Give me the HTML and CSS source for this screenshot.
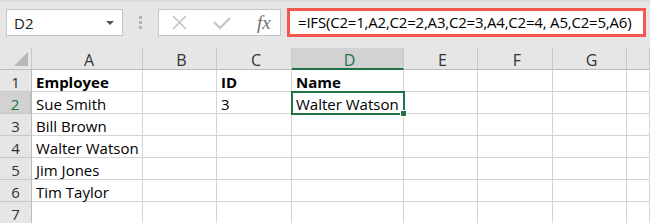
FILE: index.html
```html
<!DOCTYPE html>
<html lang="en">

<head>
    <meta charset="UTF-8">
    <title>IFS example</title>
    <link rel="stylesheet" href="styles.css">
</head>

<body>
    <div class="toolbar">
        <div class="name-box">
            <span>D2</span>
            <span class="caret"></span>
        </div>
        <div class="grip">
            <i></i><i></i><i></i>
        </div>
        <div class="fx-buttons">
            <svg class="btn-cancel" width="15" height="15" viewBox="0 0 15 15">
                <path d="M1 1 L14 14 M14 1 L1 14" stroke="#c4c4c4" stroke-width="1.6" fill="none" />
            </svg>
            <svg class="btn-enter" width="18" height="14" viewBox="0 0 18 14">
                <path d="M1 6 L7 12 L17 2" stroke="#c4c4c4" stroke-width="2.2" fill="none" />
            </svg>
            <span class="fx">fx</span>
        </div>
        <div class="formula">=IFS(C2=1,A2,C2=2,A3,C2=3,A4,C2=4, A5,C2=5,A6)</div>
    </div>

    <div class="sheet">
        <div class="row head">
            <div class="corner"><span class="tri"></span></div>
            <div class="cell c-a">A</div>
            <div class="cell c-b">B</div>
            <div class="cell c-c">C</div>
            <div class="cell c-d active">D</div>
            <div class="cell c-e">E</div>
            <div class="cell c-f">F</div>
            <div class="cell c-g">G</div>
            <div class="cell c-h"></div>
        </div>
        <div class="row">
            <div class="num">1</div>
            <div class="cell c-a bold">Employee</div>
            <div class="cell c-b"></div>
            <div class="cell c-c bold">ID</div>
            <div class="cell c-d bold">Name</div>
            <div class="cell c-e"></div>
            <div class="cell c-f"></div>
            <div class="cell c-g"></div>
            <div class="cell c-h"></div>
        </div>
        <div class="row">
            <div class="num active">2</div>
            <div class="cell c-a">Sue Smith</div>
            <div class="cell c-b"></div>
            <div class="cell c-c">3</div>
            <div class="cell c-d selected">Walter Watson<span class="handle"></span></div>
            <div class="cell c-e"></div>
            <div class="cell c-f"></div>
            <div class="cell c-g"></div>
            <div class="cell c-h"></div>
        </div>
        <div class="row">
            <div class="num">3</div>
            <div class="cell c-a">Bill Brown</div>
            <div class="cell c-b"></div>
            <div class="cell c-c"></div>
            <div class="cell c-d"></div>
            <div class="cell c-e"></div>
            <div class="cell c-f"></div>
            <div class="cell c-g"></div>
            <div class="cell c-h"></div>
        </div>
        <div class="row">
            <div class="num">4</div>
            <div class="cell c-a">Walter Watson</div>
            <div class="cell c-b"></div>
            <div class="cell c-c"></div>
            <div class="cell c-d"></div>
            <div class="cell c-e"></div>
            <div class="cell c-f"></div>
            <div class="cell c-g"></div>
            <div class="cell c-h"></div>
        </div>
        <div class="row">
            <div class="num">5</div>
            <div class="cell c-a">Jim Jones</div>
            <div class="cell c-b"></div>
            <div class="cell c-c"></div>
            <div class="cell c-d"></div>
            <div class="cell c-e"></div>
            <div class="cell c-f"></div>
            <div class="cell c-g"></div>
            <div class="cell c-h"></div>
        </div>
        <div class="row">
            <div class="num">6</div>
            <div class="cell c-a">Tim Taylor</div>
            <div class="cell c-b"></div>
            <div class="cell c-c"></div>
            <div class="cell c-d"></div>
            <div class="cell c-e"></div>
            <div class="cell c-f"></div>
            <div class="cell c-g"></div>
            <div class="cell c-h"></div>
        </div>
        <div class="row">
            <div class="num">7</div>
            <div class="cell c-a"></div>
            <div class="cell c-b"></div>
            <div class="cell c-c"></div>
            <div class="cell c-d"></div>
            <div class="cell c-e"></div>
            <div class="cell c-f"></div>
            <div class="cell c-g"></div>
            <div class="cell c-h"></div>
        </div>
    </div>
</body>

</html>
```

FILE: styles.css
```css
body {
    margin: 0;
    width: 650px;
    height: 223px;
    overflow: hidden;
    background: #e6e6e6;
    font-family: 'Open Sans', 'Noto Sans', sans-serif;
    color: #000;
}

/* formula bar */
.toolbar {
    height: 48px;
    box-sizing: border-box;
    padding-top: 7px;
    display: flex;
    align-items: flex-start;
    border-top: 2px solid #dadada;
}

.name-box {
    margin-left: 6px;
    width: 117px;
    height: 27px;
    box-sizing: border-box;
    background: #fff;
    border: 1px solid #c6c6c6;
    display: flex;
    align-items: center;
    justify-content: space-between;
    padding: 0 8px 0 7px;
    font-size: 15px;
    color: #222;
}

.caret {
    width: 0;
    height: 0;
    border-left: 4px solid transparent;
    border-right: 4px solid transparent;
    border-top: 4px solid #555;
}

.grip {
    width: 35px;
    height: 27px;
    display: flex;
    flex-direction: column;
    align-items: center;
    justify-content: center;
    gap: 2px;
}

.grip i {
    width: 3px;
    height: 3px;
    background: #b4b4b4;
}

.fx-buttons {
    width: 123px;
    height: 27px;
    box-sizing: border-box;
    background: #fff;
    border: 1px solid #c6c6c6;
    display: flex;
    align-items: center;
    padding-left: 13px;
}

.btn-enter {
    margin-left: 26px;
}

.fx {
    margin-left: 26px;
    font-family: 'Liberation Serif', serif;
    font-style: italic;
    font-size: 19px;
    color: #707070;
}

.formula {
    margin-left: 6px;
    width: 359px;
    height: 29px;
    margin-top: -1px;
    box-sizing: border-box;
    background: #fff;
    border: 3px solid #f25a4f;
    padding-left: 8px;
    font-size: 15px;
    line-height: 23px;
    white-space: nowrap;
    letter-spacing: -0.2px;
}

/* grid */
.sheet {
    background: #fff;
}

.row {
    display: flex;
    height: 22px;
}

.row > div {
    box-sizing: border-box;
    height: 22px;
    border-right: 1px solid #d4d4d4;
    border-bottom: 1px solid #d4d4d4;
    font-size: 15px;
    line-height: 21px;
    padding-top: 2px;
    white-space: nowrap;
}

.corner,
.num {
    width: 32px;
    flex: none;
    background: #e6e6e6;
    position: relative;
}

.num {
    text-align: center;
    color: #333;
    border-right-color: #bcbcbc !important;
    border-bottom-color: #c8c8c8 !important;
}

.tri {
    position: absolute;
    right: 3px;
    bottom: 3px;
    width: 0;
    height: 0;
    border-left: 14px solid transparent;
    border-bottom: 14px solid #b8b8b8;
}

.head > div {
    background: #e6e6e6;
    text-align: center;
    color: #333;
    font-size: 16px;
    border-right-color: #c8c8c8;
    border-bottom-color: #bcbcbc;
}

.head .active {
    background: #d2d2d2;
    color: #217346;
    border-bottom: 2px solid #217346;
}

.num.active {
    background: #d2d2d2;
    color: #217346;
    border-right: 2px solid #217346;
}

.cell {
    padding-left: 4px;
    overflow: visible;
}

.c-a { width: 111px; flex: none; }
.c-b { width: 74px; flex: none; }
.c-c { width: 75px; flex: none; }
.c-d { width: 112px; flex: none; }
.c-e { width: 74px; flex: none; }
.c-f { width: 75px; flex: none; }
.c-g { width: 74px; flex: none; }
.c-h { flex: 1; }

.bold {
    font-weight: bold;
}

.selected {
    position: relative;
    outline: 2px solid #217346;
    outline-offset: -1px;
}

.handle {
    position: absolute;
    right: -4px;
    bottom: -4px;
    width: 5px;
    height: 5px;
    background: #217346;
    border: 1px solid #fff;
}
```
